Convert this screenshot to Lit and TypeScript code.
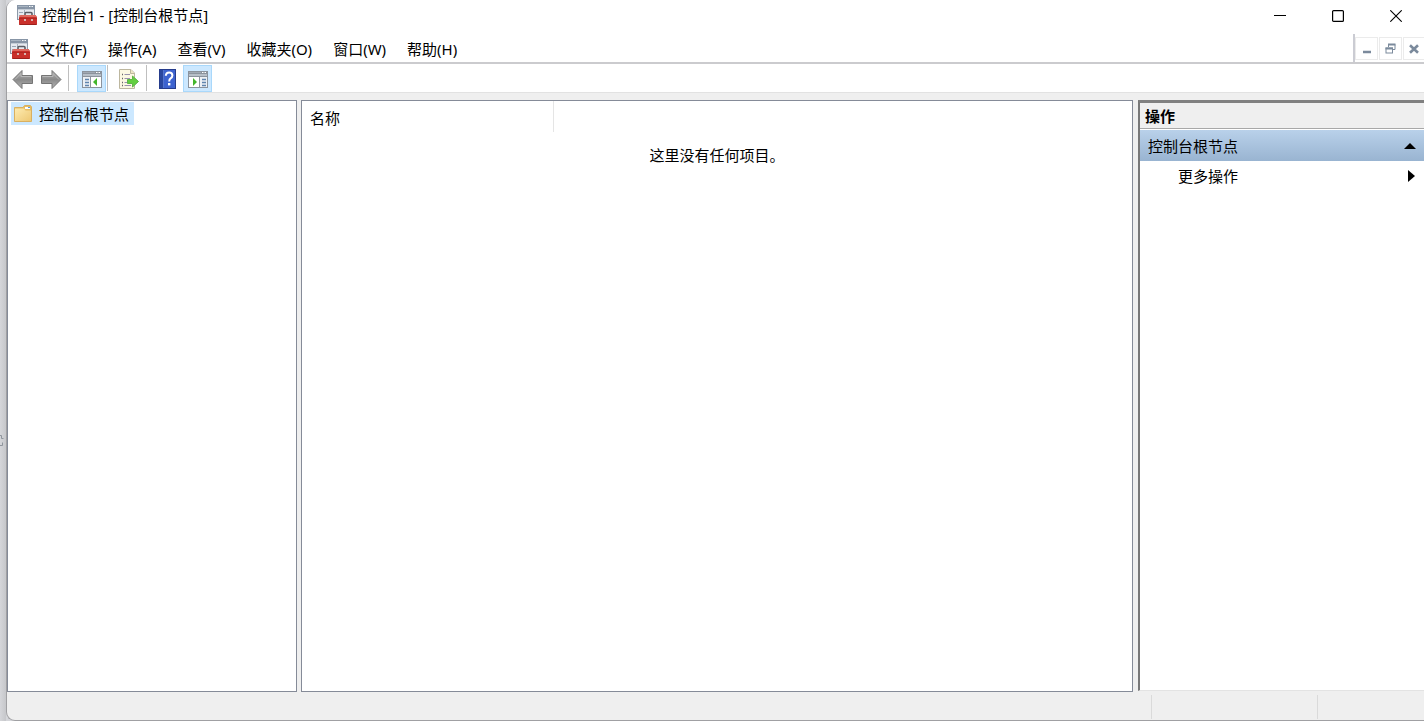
import { LitElement, html, css, svg } from "lit";
import { customElement } from "lit/decorators.js";

const consoleIcon = svg`
  <svg class="icon" width="20" height="20" viewBox="0 0 20 20" aria-hidden="true">
    <rect x="0.5" y="0.5" width="17" height="14" fill="#e6eaf0" stroke="#8c99a8"/>
    <rect x="0" y="0" width="18" height="4" fill="#8795a6"/>
    <path d="M1 1.500h10" stroke="#a9b5c2"/>
    <path d="M12 1.500h1.500M14.500 1.500h1.500" stroke="#f4f7fa"/>
    <path d="M1 4.500h16" stroke="#c4ccd5"/>
    <path d="M2 7.500h4M2 10.500h1" stroke="#9aa6b4"/>
    <path d="M7.500 5v3" stroke="#a5b1be"/>
    <path d="M8 10V8.500Q8 7.500 9 7.500h5Q15 7.500 15 8.500V10" fill="none" stroke="#5b5c63" stroke-width="1.600"/>
    <path d="M4.500 10h13q2 0 2.500 3v6q0 1-1 1h-16q-1 0-1-1v-6q0.500-3 2.500-3z" fill="#c9302b"/>
    <path d="M4.500 10h13q1.500 0 2 2h-17q0.500-2 2-2z" fill="#dd6a5f"/>
    <path d="M2 13.500h18" stroke="#b32622"/>
    <rect x="7" y="14" width="2" height="2" fill="#d8b5b2"/>
    <rect x="14" y="14" width="2" height="2" fill="#d8b5b2"/>
    <path d="M2.500 19.500h17" stroke="#9d201c"/>
  </svg>`;

const arrowShape = "M1 10.500L10 1.500V6.500H20.500V14.500H10V19.500Z";

const backIcon = svg`
  <svg width="22" height="21" viewBox="0 0 22 21" aria-hidden="true">
    <defs><linearGradient id="gb" x2="0" y2="1"><stop offset="0" stop-color="#b8b8b8"/><stop offset="0.500" stop-color="#8a8a8a"/><stop offset="1" stop-color="#b4b4b4"/></linearGradient></defs>
    <path d=${arrowShape} fill="url(#gb)" stroke="#757575" stroke-linejoin="round"/>
    <path d="M3 10.500L9 4.500V7.500H19" fill="none" stroke="#b8b8b8"/>
  </svg>`;

const forwardIcon = svg`
  <svg width="22" height="21" viewBox="0 0 22 21" aria-hidden="true">
    <defs><linearGradient id="gf" x2="0" y2="1"><stop offset="0" stop-color="#b8b8b8"/><stop offset="0.500" stop-color="#8a8a8a"/><stop offset="1" stop-color="#b4b4b4"/></linearGradient></defs>
    <g transform="translate(22 0) scale(-1 1)">
      <path d=${arrowShape} fill="url(#gf)" stroke="#757575" stroke-linejoin="round"/>
    </g>
    <path d="M2.500 7.500H13V4.500L19 10.500" fill="none" stroke="#b8b8b8"/>
  </svg>`;

const treePaneIcon = svg`
  <svg width="20" height="17" viewBox="0 0 20 17" aria-hidden="true">
    <rect x="0.500" y="0.500" width="19" height="16" fill="#fff" stroke="#8b939d"/>
    <rect x="0" y="0" width="20" height="6" fill="#8b939d"/>
    <path d="M1 4h18" stroke="#b7bfc8" stroke-width="2"/>
    <path d="M1 1.500h12" stroke="#a1a9b3"/>
    <path d="M14 1.500h1.500M16.500 1.500H18" stroke="#fff"/>
    <rect x="1" y="6" width="7" height="10" fill="#edf1f5"/>
    <path d="M8.500 6v10" stroke="#8b939d"/>
    <path d="M3 8.500h4M3 11.500h4M3 14.500h4" stroke="#5f85ae" stroke-width="1.500"/>
    <path d="M15 7v8l-4-4z" fill="#42b52c"/>
  </svg>`;

const actionPaneIcon = svg`
  <svg width="20" height="17" viewBox="0 0 20 17" aria-hidden="true">
    <rect x="0.500" y="0.500" width="19" height="16" fill="#fff" stroke="#8b939d"/>
    <rect x="0" y="0" width="20" height="6" fill="#8b939d"/>
    <path d="M1 4h18" stroke="#b7bfc8" stroke-width="2"/>
    <path d="M1 1.500h12" stroke="#a1a9b3"/>
    <path d="M14 1.500h1.500M16.500 1.500H18" stroke="#fff"/>
    <rect x="12" y="6" width="7" height="10" fill="#edf1f5"/>
    <path d="M11.500 6v10" stroke="#8b939d"/>
    <path d="M14 8.500h4M14 11.500h4M14 14.500h4" stroke="#5f85ae" stroke-width="1.500"/>
    <path d="M5 7v8l4-4z" fill="#42b52c"/>
  </svg>`;

const exportIcon = svg`
  <svg width="20" height="20" viewBox="0 0 20 20" aria-hidden="true">
    <path d="M0.500 0.500H12L15.500 4V19.500H0.500Z" fill="#fdf9e3" stroke="#bdb79f"/>
    <path d="M11.500 0.500V4.500H15.500" fill="#eee6c4" stroke="#bdb79f"/>
    <path d="M3 5.500h1M3 9.500h1M3 13.500h1M3 16.500h1" stroke="#666" stroke-width="1.500"/>
    <path d="M5.500 5.500H11M5.500 9.500H11M5.500 13.500H9M5.500 16.500H12" stroke="#9a93ad"/>
    <path d="M8.500 10.500H13.500V7L19.500 12.500L13.500 18V14.500H8.500Z" fill="#63cf3f" stroke="#5fb548"/>
  </svg>`;

const helpIcon = svg`
  <svg width="17" height="20" viewBox="0 0 17 20" aria-hidden="true">
    <rect x="0.500" y="0.500" width="16" height="19" fill="#3d63cf" stroke="#263c8c"/>
    <rect x="1" y="1" width="3" height="18" fill="#2a479f"/>
    <path d="M4.500 1v18" stroke="#5475cf"/>
    <path d="M6.800 6.800Q7 3.500 10.200 3.500T13.400 6.600Q13.400 8.300 11.600 9.400Q10.200 10.300 10.200 12.500" fill="none" stroke="#fff" stroke-width="2"/>
    <rect x="9" y="14" width="2.400" height="2.400" fill="#fff"/>
  </svg>`;

const folderIcon = svg`
  <svg width="18" height="17" viewBox="0 0 18 17" aria-hidden="true">
    <defs><linearGradient id="fd" x2="1" y2="1"><stop offset="0" stop-color="#fdebb0"/><stop offset="1" stop-color="#eec874"/></linearGradient></defs>
    <path d="M0.500 2.500H9L10.500 0.500H16.500L17.500 2V16.500H0.500Z" fill="#e8bd62" stroke="#d9b061"/>
    <rect x="11" y="2" width="5" height="2" fill="#fff"/>
    <path d="M14 2.500h2" stroke="#5c9be0"/>
    <path d="M1 3.500H10L11.500 5.500H17V16H1Z" fill="url(#fd)"/>
  </svg>`;

const menus = ["文件(F)", "操作(A)", "查看(V)", "收藏夹(O)", "窗口(W)", "帮助(H)"];

@customElement("app-root")
export class AppRoot extends LitElement {
  static styles = css`
    :host {
      display: block;
      height: 100vh;
      overflow: hidden;
      background: #d5d6da;
      color: #000;
      font: 15px/20px "Noto Sans", "Noto Sans CJK SC", sans-serif;
    }
    * { box-sizing: border-box; }
    svg { display: block; flex: none; }
    button {
      font: inherit;
      color: inherit;
      background: none;
      border: 0;
      padding: 0;
      display: flex;
      align-items: center;
      justify-content: center;
    }
    .desktop { display: flex; height: 100%; }
    .gutter {
      width: 6px;
      flex: none;
      display: flex;
      align-items: center;
      padding-top: 160px;
      background: linear-gradient(90deg, #d5d6da, #c6c7ca);
    }
    .window {
      flex: 1;
      min-width: 0;
      display: flex;
      flex-direction: column;
      background: #efefef;
      border: 1px solid #a0a0a3;
      border-width: 0 0 1px 1px;
      border-radius: 9px 0 0 9px;
      overflow: hidden;
    }
    .titlebar {
      height: 34px;
      flex: none;
      display: flex;
      align-items: flex-start;
      background: #fff;
      padding-left: 10px;
    }
    .caption {
      flex: 1;
      display: flex;
      align-items: center;
      gap: 5px;
      height: 30px;
      margin: 0;
      font-size: 15px;
      font-weight: 400;
    }
    .sysbuttons { display: flex; margin-right: -1px; }
    .sysbuttons button { width: 58px; height: 32px; }
    .menubar {
      height: 30px;
      flex: none;
      display: flex;
      background: #fff;
      border-bottom: 2px solid #cbcbce;
      padding-left: 3px;
    }
    .menus {
      flex: 1;
      display: flex;
      align-items: center;
      gap: 21px;
      padding-top: 2px;
    }
    .menus .icon { margin-right: -11px; }
    .mdi {
      display: flex;
      align-items: center;
      gap: 1px;
      padding-top: 1px;
      border-left: 2px solid #cbccd3;
    }
    .mdi button {
      width: 23px;
      height: 23px;
      border: 1px solid #ebebeb;
    }
    .mdi button:last-child { width: 21px; border-right: 0; }
    .toolbar {
      height: 29px;
      flex: none;
      display: flex;
      align-items: center;
      background: #fff;
      border-bottom: 1px solid #e2e2e2;
      padding-left: 2px;
    }
    .tool { width: 28px; height: 27px; padding-top: 2px; }
    .tool.on {
      width: 29px;
      background: #cce8ff;
      border: 1px solid #a9d8fb;
    }
    .tool.help { margin-right: 2px; }
    .sep { width: 1px; height: 26px; background: #bfbfbf; margin: 0 8px 0 3px; }
    .sep.tight { margin: 0 7px 0 1px; }
    .sep.close { margin-right: 6px; }
    .panes {
      flex: 1;
      min-height: 0;
      display: grid;
      grid-template-columns: 290px minmax(0, 1fr) 287px;
      column-gap: 4px;
      padding-top: 7px;
    }
    .tree, .list { background: #fff; border: 1px solid #858b98; }
    .tree { padding: 1px 3px; }
    .node {
      height: 23px;
      display: inline-flex;
      align-items: center;
      gap: 7px;
      background: #cce8ff;
      padding: 0 5px 0 3px;
    }
    table { width: 100%; border-collapse: collapse; table-layout: fixed; }
    .name {
      width: 251px;
      height: 31px;
      padding: 3px 8px 0;
      font-weight: 400;
      text-align: left;
      border-right: 1px solid #e5e5e5;
    }
    .empty { padding: 13px 0 0; text-align: center; }
    .actions {
      margin-left: 1px;
      margin-bottom: 1px;
      background: #fff;
      border-left: 2px solid #787878;
      border-top: 3px solid #808080;
      border-bottom: 1px solid #e3e3e3;
    }
    .actions h2 {
      margin: 0;
      height: 26px;
      padding: 3px 5px 0;
      font-size: 15px;
      line-height: 20px;
      font-weight: 700;
      background: #efefef;
      border-bottom: 1px solid #a8a8a8;
    }
    .group, .more { width: 100%; justify-content: space-between; padding: 0 8px; }
    .group {
      height: 31px;
      margin-top: 1px;
      background: linear-gradient(#b9d1ea, #99b4d1);
    }
    .more { height: 30px; padding: 0 9px 0 38px; }
    .status { height: 28px; flex: none; display: flex; justify-content: flex-end; padding: 3px 0 1px; }
    .cell { width: 166px; border-left: 1px solid #dadada; }
    .cell.last { width: 107px; }
  `;

  render() {
    return html`
      <div class="desktop">
        <div class="gutter">
          <svg width="4" height="13" viewBox="0 0 4 13" aria-hidden="true">
            <path d="M0 1.500H1.500V4.500H3.500M0 11.500H2.500V8.500" fill="none" stroke="#8f959c"/>
          </svg>
        </div>
        <main class="window">
          <header class="titlebar">
            <h1 class="caption">${consoleIcon}<span>控制台1 - [控制台根节点]</span></h1>
            <div class="sysbuttons">
              <button aria-label="最小化">
                <svg width="12" height="12" viewBox="0 0 12 12"><path d="M0 5.500h12" stroke="#000"/></svg>
              </button>
              <button aria-label="最大化">
                <svg width="12" height="12" viewBox="0 0 12 12"><rect x="0.600" y="0.600" width="10.800" height="10.800" rx="1" fill="none" stroke="#000" stroke-width="1.200"/></svg>
              </button>
              <button aria-label="关闭">
                <svg width="12" height="12" viewBox="0 0 12 12"><path d="M0.300 0.300l11.400 11.400M11.700 0.300L0.300 11.700" stroke="#000" stroke-width="1.100"/></svg>
              </button>
            </div>
          </header>
          <div class="menubar">
            <nav class="menus">${consoleIcon}${menus.map((m) => html`<button>${m}</button>`)}</nav>
            <div class="mdi">
              <button aria-label="最小化子窗口">
                <svg width="10" height="10" viewBox="0 0 10 10"><path d="M1 8h8" stroke="#7b8a9c" stroke-width="2.500"/></svg>
              </button>
              <button aria-label="还原子窗口">
                <svg width="11" height="11" viewBox="0 0 11 11"><path d="M3.500 4V1.500H10V6.500H8" fill="none" stroke="#7b8a9c"/><path d="M3 1.500h7.500M0.500 5.500H8" stroke="#7b8a9c" stroke-width="2"/><rect x="1" y="5" width="6.500" height="5" fill="none" stroke="#7b8a9c"/></svg>
              </button>
              <button aria-label="关闭子窗口">
                <svg width="10" height="10" viewBox="0 0 10 10"><path d="M1 1.200L9 8.800M9 1.200L1 8.800" stroke="#7b8a9c" stroke-width="2.600"/></svg>
              </button>
            </div>
          </div>
          <div class="toolbar" role="toolbar">
            <button class="tool" aria-label="后退">${backIcon}</button>
            <button class="tool" aria-label="前进">${forwardIcon}</button>
            <span class="sep"></span>
            <button class="tool on" aria-label="显示/隐藏控制台树">${treePaneIcon}</button>
            <span class="sep tight"></span>
            <button class="tool" aria-label="导出列表">${exportIcon}</button>
            <span class="sep close"></span>
            <button class="tool help" aria-label="帮助">${helpIcon}</button>
            <button class="tool on" aria-label="显示/隐藏操作窗格">${actionPaneIcon}</button>
          </div>
          <div class="panes">
            <section class="tree">
              <button class="node">${folderIcon}<span>控制台根节点</span></button>
            </section>
            <section class="list">
              <table>
                <thead><tr><th class="name" scope="col">名称</th><td></td></tr></thead>
                <tbody><tr><td class="empty" colspan="2">这里没有任何项目。</td></tr></tbody>
              </table>
            </section>
            <aside class="actions">
              <h2>操作</h2>
              <button class="group"><span>控制台根节点</span>
                <svg width="12" height="6" viewBox="0 0 12 6" aria-hidden="true"><path d="M0 6L6 0L12 6Z"/></svg>
              </button>
              <button class="more"><span>更多操作</span>
                <svg width="7" height="12" viewBox="0 0 7 12" aria-hidden="true"><path d="M0 0L7 6L0 12Z"/></svg>
              </button>
            </aside>
          </div>
          <footer class="status"><span class="cell"></span><span class="cell last"></span></footer>
        </main>
      </div>
    `;
  }
}
